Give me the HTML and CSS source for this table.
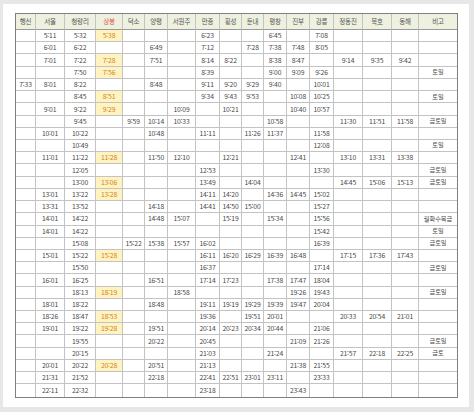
FILE: index.html
```html
<!DOCTYPE html>
<html lang="ko">
<head>
<meta charset="utf-8">
<title>시간표</title>
<link rel="stylesheet" href="styles.css">
</head>
<body>
<div class="panel">
<table class="tt">
<colgroup>
<col class="c20"><col class="c29"><col class="c31"><col class="c27"><col class="c22"><col class="c23"><col class="c28"><col class="c24"><col class="c22"><col class="c22"><col class="c23"><col class="c23"><col class="c24"><col class="c29"><col class="c29"><col class="c27"><col class="c38">
</colgroup>
<thead>
<tr><th>행신</th><th>서울</th><th>청량리</th><th class="sb">상봉</th><th>덕소</th><th>양평</th><th>서원주</th><th>만종</th><th>횡성</th><th>둔내</th><th>평창</th><th>진부</th><th>강릉</th><th>정동진</th><th>묵호</th><th>동해</th><th>비고</th></tr>
</thead>
<tbody>
<tr><td></td><td>5:11</td><td>5:32</td><td class="hl">5:38</td><td></td><td></td><td></td><td>6:23</td><td></td><td></td><td>6:45</td><td></td><td>7:08</td><td></td><td></td><td></td><td></td></tr>
<tr><td></td><td>6:01</td><td>6:22</td><td></td><td></td><td>6:49</td><td></td><td>7:12</td><td></td><td>7:28</td><td>7:38</td><td>7:48</td><td>8:05</td><td></td><td></td><td></td><td></td></tr>
<tr><td></td><td>7:01</td><td>7:22</td><td class="hl">7:28</td><td></td><td>7:51</td><td></td><td>8:14</td><td>8:22</td><td></td><td>8:38</td><td>8:47</td><td></td><td>9:14</td><td>9:35</td><td>9:42</td><td></td></tr>
<tr><td></td><td></td><td>7:50</td><td class="hl">7:56</td><td></td><td></td><td></td><td>8:39</td><td></td><td></td><td>9:00</td><td>9:09</td><td>9:26</td><td></td><td></td><td></td><td class="rm">토일</td></tr>
<tr><td>7:33</td><td>8:01</td><td>8:22</td><td></td><td></td><td>8:48</td><td></td><td>9:11</td><td>9:20</td><td>9:29</td><td>9:40</td><td></td><td>10:01</td><td></td><td></td><td></td><td></td></tr>
<tr><td></td><td></td><td>8:45</td><td class="hl">8:51</td><td></td><td></td><td></td><td>9:34</td><td>9:43</td><td>9:53</td><td></td><td>10:08</td><td>10:25</td><td></td><td></td><td></td><td class="rm">토일</td></tr>
<tr><td></td><td>9:01</td><td>9:22</td><td class="hl">9:29</td><td></td><td></td><td>10:09</td><td></td><td>10:21</td><td></td><td></td><td>10:40</td><td>10:57</td><td></td><td></td><td></td><td></td></tr>
<tr><td></td><td></td><td>9:45</td><td></td><td>9:59</td><td>10:14</td><td>10:33</td><td></td><td></td><td></td><td>10:58</td><td></td><td></td><td>11:30</td><td>11:51</td><td>11:58</td><td class="rm">금토일</td></tr>
<tr><td></td><td>10:01</td><td>10:22</td><td></td><td></td><td>10:48</td><td></td><td>11:11</td><td></td><td>11:26</td><td>11:37</td><td></td><td>11:58</td><td></td><td></td><td></td><td></td></tr>
<tr><td></td><td></td><td>10:49</td><td></td><td></td><td></td><td></td><td></td><td></td><td></td><td></td><td></td><td>12:08</td><td></td><td></td><td></td><td class="rm">토일</td></tr>
<tr><td></td><td>11:01</td><td>11:22</td><td class="hl">11:28</td><td></td><td>11:50</td><td>12:10</td><td></td><td>12:21</td><td></td><td></td><td>12:41</td><td></td><td>13:10</td><td>13:31</td><td>13:38</td><td></td></tr>
<tr><td></td><td></td><td>12:05</td><td></td><td></td><td></td><td></td><td>12:53</td><td></td><td></td><td></td><td></td><td>13:30</td><td></td><td></td><td></td><td class="rm">금토일</td></tr>
<tr><td></td><td></td><td>13:00</td><td class="hl">13:06</td><td></td><td></td><td></td><td>13:49</td><td></td><td>14:04</td><td></td><td></td><td></td><td>14:45</td><td>15:06</td><td>15:13</td><td class="rm">금토일</td></tr>
<tr><td></td><td>13:01</td><td>13:22</td><td class="hl">13:28</td><td></td><td></td><td></td><td>14:11</td><td>14:20</td><td></td><td>14:36</td><td>14:45</td><td>15:02</td><td></td><td></td><td></td><td></td></tr>
<tr><td></td><td>13:31</td><td>13:52</td><td></td><td></td><td>14:18</td><td></td><td>14:41</td><td>14:50</td><td>15:00</td><td></td><td></td><td>15:27</td><td></td><td></td><td></td><td></td></tr>
<tr><td></td><td>14:01</td><td>14:22</td><td></td><td></td><td>14:48</td><td>15:07</td><td></td><td>15:19</td><td></td><td>15:34</td><td></td><td>15:56</td><td></td><td></td><td></td><td class="rm">월화수목금</td></tr>
<tr><td></td><td>14:01</td><td>14:22</td><td></td><td></td><td></td><td></td><td></td><td></td><td></td><td></td><td></td><td>15:42</td><td></td><td></td><td></td><td class="rm">토일</td></tr>
<tr><td></td><td></td><td>15:08</td><td></td><td>15:22</td><td>15:38</td><td>15:57</td><td>16:02</td><td></td><td></td><td></td><td></td><td>16:39</td><td></td><td></td><td></td><td class="rm">금토일</td></tr>
<tr><td></td><td>15:01</td><td>15:22</td><td class="hl">15:28</td><td></td><td></td><td></td><td>16:11</td><td>16:20</td><td>16:29</td><td>16:39</td><td>16:48</td><td></td><td>17:15</td><td>17:36</td><td>17:43</td><td></td></tr>
<tr><td></td><td></td><td>15:50</td><td></td><td></td><td></td><td></td><td>16:37</td><td></td><td></td><td></td><td></td><td>17:14</td><td></td><td></td><td></td><td class="rm">금토일</td></tr>
<tr><td></td><td>16:01</td><td>16:25</td><td></td><td></td><td>16:51</td><td></td><td>17:14</td><td>17:23</td><td></td><td>17:38</td><td>17:47</td><td>18:04</td><td></td><td></td><td></td><td></td></tr>
<tr><td></td><td></td><td>18:13</td><td class="hl">18:19</td><td></td><td></td><td>18:58</td><td></td><td></td><td></td><td></td><td>19:26</td><td>19:43</td><td></td><td></td><td></td><td class="rm">금토일</td></tr>
<tr><td></td><td>18:01</td><td>18:22</td><td></td><td></td><td>18:48</td><td></td><td>19:11</td><td>19:19</td><td>19:29</td><td>19:39</td><td>19:47</td><td>20:04</td><td></td><td></td><td></td><td></td></tr>
<tr><td></td><td>18:26</td><td>18:47</td><td class="hl">18:53</td><td></td><td></td><td></td><td>19:36</td><td></td><td>19:51</td><td>20:01</td><td></td><td></td><td>20:33</td><td>20:54</td><td>21:01</td><td></td></tr>
<tr><td></td><td>19:01</td><td>19:22</td><td class="hl">19:28</td><td></td><td>19:51</td><td></td><td>20:14</td><td>20:23</td><td>20:34</td><td>20:44</td><td></td><td>21:06</td><td></td><td></td><td></td><td></td></tr>
<tr><td></td><td></td><td>19:55</td><td></td><td></td><td>20:22</td><td></td><td>20:45</td><td></td><td></td><td></td><td>21:09</td><td>21:26</td><td></td><td></td><td></td><td class="rm">금토일</td></tr>
<tr><td></td><td></td><td>20:15</td><td></td><td></td><td></td><td></td><td>21:03</td><td></td><td></td><td>21:24</td><td></td><td></td><td>21:57</td><td>22:18</td><td>22:25</td><td class="rm">금토</td></tr>
<tr><td></td><td>20:01</td><td>20:22</td><td class="hl">20:28</td><td></td><td>20:51</td><td></td><td>21:13</td><td></td><td></td><td></td><td>21:38</td><td>21:55</td><td></td><td></td><td></td><td></td></tr>
<tr><td></td><td>21:31</td><td>21:52</td><td></td><td></td><td>22:18</td><td></td><td>22:41</td><td>22:51</td><td>23:01</td><td>23:11</td><td></td><td>23:33</td><td></td><td></td><td></td><td></td></tr>
<tr><td></td><td>22:11</td><td>22:32</td><td></td><td></td><td></td><td></td><td>23:18</td><td></td><td></td><td></td><td>23:43</td><td></td><td></td><td></td><td></td><td></td></tr>
</tbody>
</table>
</div>
</body>
</html>
```
FILE: styles.css
```css
html, body {
  margin: 0;
  padding: 0;
}
body {
  background: #e7e7e7;
  width: 474px;
  height: 412px;
  overflow: hidden;
  font-family: "Noto Sans CJK KR", "Noto Sans", sans-serif;
}
.panel {
  box-sizing: border-box;
  margin: 4px 5px 0 3px;
  width: 466px;
  height: 403px;
  background: #ffffff;
  padding: 9px 0 0 12px;
}
.tt {
  table-layout: fixed;
  width: 443px;
  border-collapse: separate;
  border-spacing: 0;
  border: 1px solid #7f7f7f;
  color: #4a4a4a;
  font-size: 6.8px;
  letter-spacing: -0.15px;
}
.c20 { width: 20px; }
.c22 { width: 22px; }
.c23 { width: 23px; }
.c24 { width: 24px; }
.c27 { width: 27px; }
.c28 { width: 28px; }
.c29 { width: 29px; }
.c31 { width: 31px; }
.c38 { width: 38px; }
.tt th, .tt td {
  padding: 0;
  text-align: center;
  vertical-align: middle;
  border-right: 1px solid #c3c3c3;
  border-bottom: 1px solid #c3c3c3;
  white-space: nowrap;
  overflow: hidden;
  line-height: 1;
}
.tt th:last-child, .tt td:last-child {
  border-right: none;
}
.tt tbody tr:last-child td {
  border-bottom: none;
}
.tt th {
  background: #eef0e0;
  font-weight: normal;
  height: 15px;
  font-size: 6.5px;
  color: #555555;
  border-bottom-color: #9a9a9a;
}
.tt tbody tr {
  height: 12.23px;
}
.tt td.rm {
  font-size: 6.2px;
  letter-spacing: 0;
}
.tt th.sb {
  color: #e0574b;
}
.tt td.hl {
  background: #fff3c2;
  color: #cf8526;
}
```
